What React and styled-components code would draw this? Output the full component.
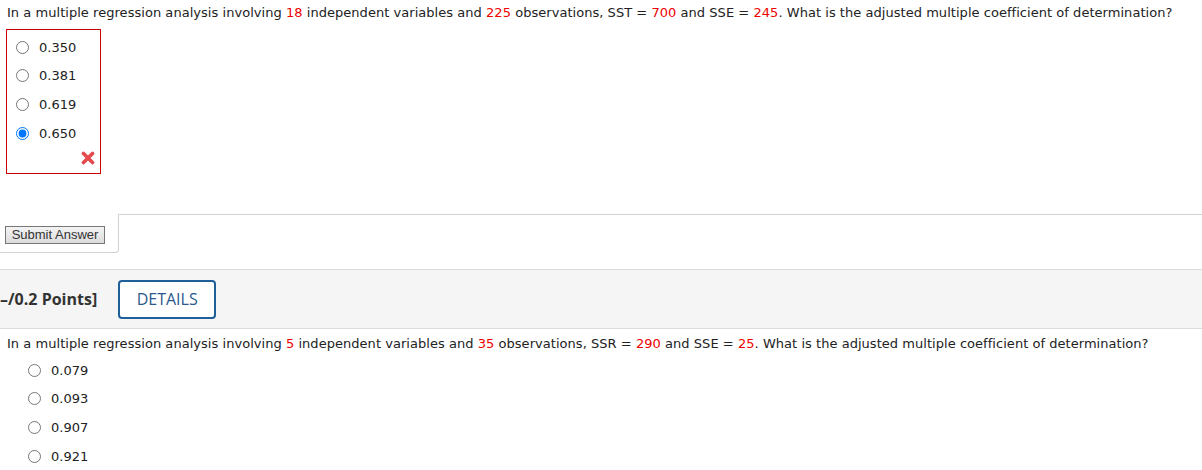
import React from "react"
import styled, { createGlobalStyle } from "styled-components"

const Global = createGlobalStyle`
  body {
    margin: 0;
    background: #fff;
    font-family: "DejaVu Sans", Verdana, sans-serif;
    color: #222;
  }
`

const Page = styled.div`
  width: 1202px;
  overflow: hidden;
`

const Question = styled.p`
  margin: ${p => p.top}px 0 0 7px;
  font-size: 13px;
  line-height: 16px;
  letter-spacing: 0.04px;
  white-space: nowrap;
`

const Num = styled.span`
  color: #e00;
`

const AnswerBox = styled.div`
  margin: 8px 0 0 6px;
  width: 93px;
  height: 140px;
  border: 1px solid #c00;
  padding-top: 3px;
  box-sizing: content-box;
  display: flex;
  flex-direction: column;
`

const OptionList = styled.div`
  display: flex;
  flex-direction: column;
  padding: ${p => p.pad || "0"};
`

const Option = styled.label`
  display: flex;
  align-items: center;
  height: 28.67px;
  font-size: 13px;
`

const Radio = styled.input`
  margin: 0 10px 0 ${p => p.left}px;
  width: 13px;
  height: 13px;
`

const WrongMark = styled.div`
  display: flex;
  justify-content: flex-end;
  padding: 3px 5px 0 0;
`

const SubmitRow = styled.div`
  display: flex;
  margin-top: 40px;
  height: 39px;
`

const SubmitCell = styled.div`
  width: 119px;
  display: flex;
  align-items: flex-start;
  border-right: 1px solid #d2d2d2;
  border-bottom: 1px solid #d2d2d2;
  border-bottom-right-radius: 4px;
  padding: 12px 0 0 5px;
  box-sizing: border-box;
`

const SubmitButton = styled.button`
  width: 100px;
  height: 18px;
  padding: 0;
  font-family: "Liberation Sans", Arial, sans-serif;
  font-size: 13px;
  line-height: 16px;
  color: #333;
  border: 1px solid #777;
  border-radius: 0;
  background: linear-gradient(#f4f4f4, #dcdcdc);
`

const RestCell = styled.div`
  flex: 1;
  border-top: 1px solid #d2d2d2;
`

const HeaderBand = styled.div`
  margin-top: 16px;
  height: 58px;
  background: #f5f5f5;
  border-top: 1px solid #dcdcdc;
  border-bottom: 1px solid #dcdcdc;
  display: flex;
  align-items: center;
  gap: 21px;
  font-family: "Open Sans", sans-serif;
`

const Points = styled.span`
  font-weight: 700;
  font-size: 16px;
  color: #333;
`

const DetailsButton = styled.button`
  width: 98px;
  height: 39px;
  border: 2px solid #1f5f99;
  border-radius: 4px;
  background: #fff;
  color: #2b5a8a;
  font-family: "Open Sans", sans-serif;
  font-size: 16px;
  font-weight: 500;
`

const q1 = ["0.350", "0.381", "0.619", "0.650"]
const q2 = ["0.079", "0.093", "0.907", "0.921"]

function WrongIcon() {
  return (
    <svg width="14" height="14" viewBox="0 0 14 14">
      <path d="M2.5 2.5 L11.5 11.5 M11.5 2.5 L2.5 11.5" stroke="#e5484d" strokeWidth="3.6" strokeLinecap="round" />
    </svg>
  )
}

export default function App() {
  return (
    <Page>
      <Global />
      <Question top={5}>
        In a multiple regression analysis involving <Num>18</Num> independent variables and <Num>225</Num> observations, SST = <Num>700</Num> and SSE = <Num>245</Num>. What is the adjusted multiple coefficient of determination?
      </Question>
      <AnswerBox>
        <OptionList>
          {q1.map((v, i) => (
            <Option key={v}>
              <Radio type="radio" name="q1" left={9} defaultChecked={i === 3} />
              {v}
            </Option>
          ))}
        </OptionList>
        <WrongMark>
          <WrongIcon />
        </WrongMark>
      </AnswerBox>
      <SubmitRow>
        <SubmitCell>
          <SubmitButton>Submit Answer</SubmitButton>
        </SubmitCell>
        <RestCell />
      </SubmitRow>
      <HeaderBand>
        <Points>–/0.2 Points]</Points>
        <DetailsButton>DETAILS</DetailsButton>
      </HeaderBand>
      <Question top={7}>
        In a multiple regression analysis involving <Num>5</Num> independent variables and <Num>35</Num> observations, SSR = <Num>290</Num> and SSE = <Num>25</Num>. What is the adjusted multiple coefficient of determination?
      </Question>
      <OptionList pad="4px 0 0 0">
        {q2.map(v => (
          <Option key={v}>
            <Radio type="radio" name="q2" left={28} />
            {v}
          </Option>
        ))}
      </OptionList>
    </Page>
  )
}
